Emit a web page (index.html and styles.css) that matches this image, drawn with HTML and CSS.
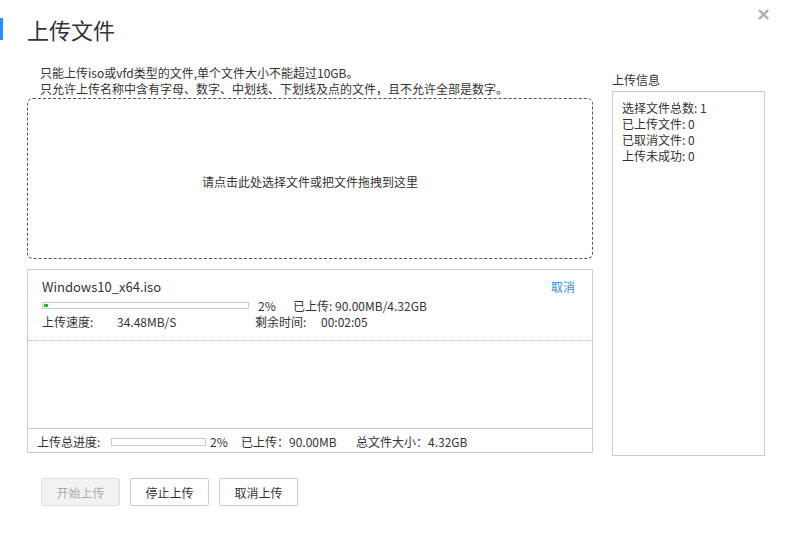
FILE: index.html
```html
<!DOCTYPE html>
<html lang="zh-CN">
<head>
<meta charset="utf-8">
<title>上传文件</title>
<link rel="stylesheet" href="styles.css">
</head>
<body>
<div class="dialog">
  <span class="close">×</span>
  <header class="head">
    <span class="head-bar"></span>
    <h1 class="head-title">上传文件</h1>
  </header>
  <div class="content">
    <section class="main">
      <p class="tip">只能上传iso或vfd类型的文件,单个文件大小不能超过10GB。<br>只允许上传名称中含有字母、数字、中划线、下划线及点的文件，且不允许全部是数字。</p>
      <div class="drop">请点击此处选择文件或把文件拖拽到这里</div>
      <div class="list">
        <div class="items">
          <div class="item">
            <div class="item-top">
              <span class="item-name">Windows10_x64.iso</span>
              <a class="item-cancel">取消</a>
            </div>
            <div class="item-progress">
              <span class="bar"><span class="bar-fill" style="width:2%"></span></span>
              <span class="pct">2%</span>
              <span>已上传: 90.00MB/4.32GB</span>
            </div>
            <div class="item-stats">
              <span class="speed-label">上传速度:</span>
              <span class="speed-value">34.48MB/S</span>
              <span class="remain-label">剩余时间:</span>
              <span>00:02:05</span>
            </div>
          </div>
        </div>
        <div class="total">
          <span class="total-label">上传总进度:</span>
          <span class="total-bar"></span>
          <span class="total-pct">2%</span>
          <span class="total-up">已上传：90.00MB</span>
          <span>总文件大小：4.32GB</span>
        </div>
      </div>
    </section>
    <aside class="info">
      <div class="info-title">上传信息</div>
      <div class="info-box">
        <div>选择文件总数: 1</div>
        <div>已上传文件: 0</div>
        <div>已取消文件: 0</div>
        <div>上传未成功: 0</div>
      </div>
    </aside>
  </div>
  <div class="actions">
    <button class="btn btn-disabled" disabled>开始上传</button>
    <button class="btn">停止上传</button>
    <button class="btn">取消上传</button>
  </div>
</div>
</body>
</html>
```

FILE: styles.css
```css
* { box-sizing: border-box; }
html, body { margin: 0; padding: 0; background: #fff; }
body {
  font-family: "Noto Sans CJK SC", "Noto Sans", sans-serif;
  font-size: 12px;
  color: #333;
  line-height: 16px;
}
.dialog { position: relative; width: 791px; height: 535px; }
.close {
  position: absolute;
  right: 20px;
  top: 4px;
  font-size: 18px;
  line-height: 20px;
  color: #aaa;
  font-weight: bold;
  font-family: "DejaVu Sans", sans-serif;
}
.head { display: flex; align-items: center; padding-top: 18px; height: 40px; }
.head-bar { width: 3px; height: 22px; background: #2d8cf0; }
.head-title {
  margin: 0 0 0 24px;
  font-size: 22px;
  line-height: 22px;
  font-weight: normal;
  color: #333;
}
.content { display: flex; align-items: flex-start; padding-left: 27px; margin-top: 25px; }
.main { width: 566px; }
.tip { margin: 0 0 1px 0; padding-left: 13px; line-height: 16px; }
.drop {
  height: 161px;
  border: 1px dashed #555;
  border-radius: 6px;
  display: flex;
  align-items: center;
  justify-content: center;
  padding-top: 6px;
}
.list {
  margin-top: 10px;
  height: 184px;
  border: 1px solid #ccc;
  display: flex;
  flex-direction: column;
}
.items { flex: 1; }
.item { padding: 9px 17px 10px 14px; border-bottom: 1px dotted #bbb; }
.item-top { display: flex; justify-content: space-between; line-height: 16px; font-size: 13px; }
.item-cancel { color: #2d8cf0; font-size: 12px; }
.item-progress { display: flex; align-items: center; height: 18px; padding-top: 4px; line-height: 14px; }
.bar {
  width: 207px;
  height: 7px;
  border: 1px solid #ccc;
  display: flex;
  padding: 1px;
  margin-top: -2px;
}
.bar-fill { background: #2cb530; min-width: 2px; }
.pct { width: 35px; margin-left: 9px; }
.item-stats { display: flex; line-height: 16px; padding-top: 1px; }
.speed-label { width: 75px; }
.speed-value { width: 138px; }
.remain-label { width: 66px; }
.total {
  border-top: 1px solid #ccc;
  display: flex;
  align-items: center;
  height: 24px;
  padding: 3px 0 0 9px;
}
.total-label { width: 74px; }
.total-bar { width: 95px; height: 8px; border: 1px solid #ccc; }
.total-pct { width: 31px; margin-left: 4px; }
.total-up { width: 115px; }
.info { margin-left: 19px; padding-top: 7px; }
.info-title { line-height: 16px; margin-bottom: 3px; }
.info-box {
  width: 153px;
  height: 365px;
  border: 1px solid #ccc;
  padding: 8px 9px;
}
.actions { display: flex; gap: 10px; padding-left: 41px; margin-top: 22px; }
.btn {
  width: 79px;
  height: 28px;
  border: 1px solid #ccc;
  background: #fff;
  color: #333;
  font-family: inherit;
  font-size: 12px;
  padding: 0;
  border-radius: 2px;
}
.btn-disabled { background: #f2f2f2; color: #aaa; border-color: #ddd; }
```
